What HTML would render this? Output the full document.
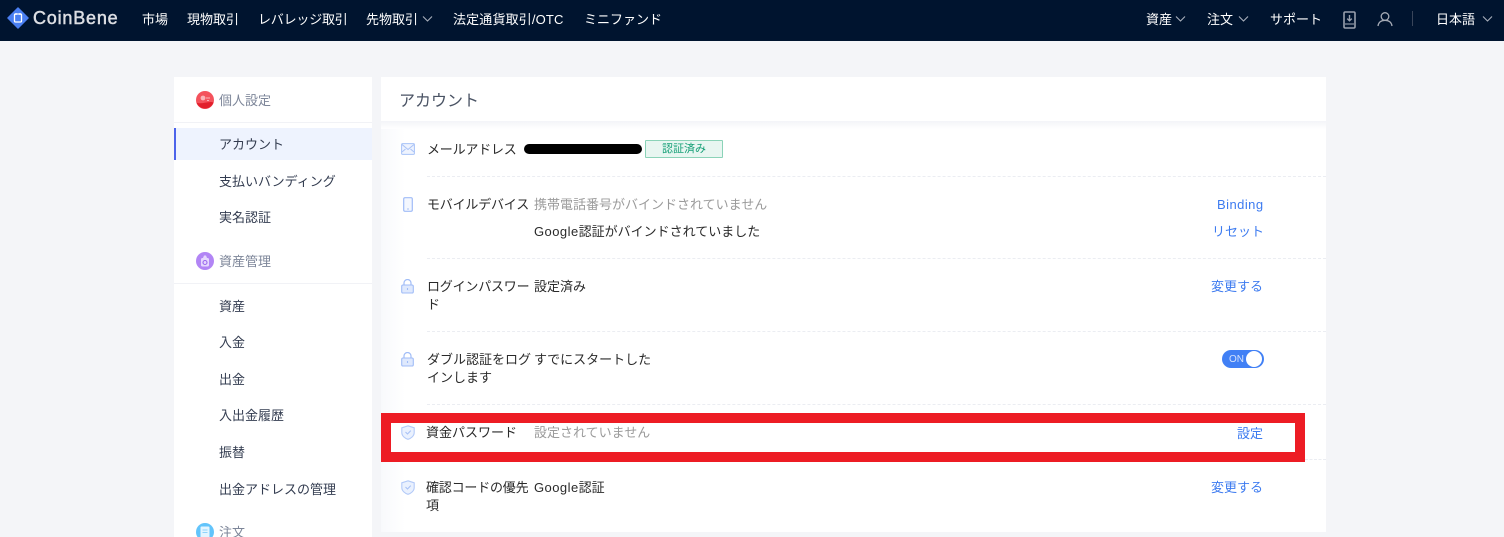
<!DOCTYPE html>
<html lang="ja">
<head>
<meta charset="utf-8">
<title>CoinBene</title>
<style>
html,body{margin:0;padding:0;width:1504px;height:537px;overflow:hidden;background:#f4f5f8;}
body{position:relative;font-family:"Liberation Sans","Noto Sans CJK JP",sans-serif;font-size:13px;color:#2b3447;}
.t{position:absolute;white-space:nowrap;line-height:18px;}
.w{position:absolute;line-height:18px;}
.nav{color:#fff;font-size:13px;line-height:18px;top:11px;}
.box{position:absolute;background:#fff;}
.side{color:#333c50;}
.head{color:#7d8699;}
.dash{position:absolute;left:427px;width:899px;height:0;border-top:1px dashed #ebedf2;}
.line{position:absolute;left:174px;width:198px;height:1px;background:#f1f2f6;}
.blue{color:#3d7bf0;}
.gray{color:#9b9b9b;}
.dark{color:#2a2a2a;}
.g{letter-spacing:.45px;}
svg{position:absolute;display:block;}
</style>
</head>
<body>
<!-- top nav -->
<div style="position:absolute;left:0;top:0;width:1504px;height:41px;background:#00142f;"></div>
<svg style="left:7px;top:7px" width="22" height="22" viewBox="0 0 22 22">
<path d="M11 1 L21 11 L11 21 L1 11 Z" fill="#4a7ff2" stroke="#4a7ff2" stroke-linejoin="round" stroke-width="1.5"/>
<rect x="7.5" y="7" width="7" height="8" rx="1" fill="none" stroke="#fff" stroke-width="1.3"/>
<path d="M9 6v2M13 6v2" stroke="#fff" stroke-width="1"/>
</svg>
<div class="t" style="left:33px;top:8px;color:#dcdee3;font-size:18px;font-weight:normal;-webkit-text-stroke:.5px #dcdee3;line-height:20px;letter-spacing:.8px;">CoinBene</div>
<div class="t nav" style="left:142px;">市場</div>
<div class="t nav" style="left:187px;">現物取引</div>
<div class="t nav" style="left:258px;letter-spacing:-.2px;">レバレッジ取引</div>
<div class="t nav" style="left:366px;">先物取引</div>
<svg style="left:422px;top:15px" width="11" height="8" viewBox="0 0 11 8"><path d="M1 1.5 L5.5 6 L10 1.5" fill="none" stroke="#a9b0bc" stroke-width="1.1"/></svg>
<div class="t nav" style="left:453px;letter-spacing:.15px;">法定通貨取引/OTC</div>
<div class="t nav" style="left:584px;">ミニファンド</div>

<div class="t nav" style="left:1146px;">資産</div>
<svg style="left:1175px;top:15px" width="11" height="8" viewBox="0 0 11 8"><path d="M1 1.5 L5.5 6 L10 1.5" fill="none" stroke="#a9b0bc" stroke-width="1.1"/></svg>
<div class="t nav" style="left:1207px;">注文</div>
<svg style="left:1238px;top:15px" width="11" height="8" viewBox="0 0 11 8"><path d="M1 1.5 L5.5 6 L10 1.5" fill="none" stroke="#a9b0bc" stroke-width="1.1"/></svg>
<div class="t nav" style="left:1270px;">サポート</div>
<svg style="left:1343px;top:11px" width="13" height="18" viewBox="0 0 13 18">
<rect x="1" y="1" width="11" height="16" rx="1.2" fill="none" stroke="#99a0ad" stroke-width="1.6"/>
<path d="M6.5 4v5.5M4.2 7.6 L6.5 9.8 L8.8 7.6" fill="none" stroke="#99a0ad" stroke-width="1.4"/>
<path d="M2 13h9" stroke="#99a0ad" stroke-width="1.1"/>
</svg>
<svg style="left:1377px;top:11px" width="16" height="16" viewBox="0 0 16 16">
<circle cx="8" cy="5.5" r="3.8" fill="none" stroke="#a5abb6" stroke-width="1.3"/>
<path d="M1 15 C1.5 11 4.5 9.3 8 9.3 C11.5 9.3 14.5 11 15 15" fill="none" stroke="#a5abb6" stroke-width="1.3"/>
</svg>
<div style="position:absolute;left:1412px;top:11px;width:1px;height:15px;background:#39455a;"></div>
<div class="t nav" style="left:1436px;">日本語</div>
<svg style="left:1482px;top:15px" width="11" height="8" viewBox="0 0 11 8"><path d="M1 1.5 L5.5 6 L10 1.5" fill="none" stroke="#a9b0bc" stroke-width="1.1"/></svg>

<!-- sidebar -->
<div class="box" style="left:174px;top:77px;width:198px;height:460px;"></div>
<svg style="left:196px;top:91px" width="18" height="18" viewBox="0 0 18 18">
<circle cx="9" cy="9" r="9" fill="#f4525c"/>
<path d="M0.5 11.5 C5 14 13 9.5 17.5 11.5 A9 9 0 0 1 0.5 11.5Z" fill="#e2202c"/>
<circle cx="7" cy="7" r="2.4" fill="#f9b4b8"/><path d="M10 7h4M11 9.5h2" stroke="#f9b4b8" stroke-width="1"/>
</svg>
<div class="t head" style="left:219px;top:92px;">個人設定</div>
<div class="line" style="top:122px;"></div>
<div style="position:absolute;left:174px;top:128px;width:198px;height:32px;background:#eef3fe;"></div>
<div style="position:absolute;left:174px;top:128px;width:2px;height:32px;background:#4c63ea;"></div>
<div class="t side" style="left:219px;top:136px;">アカウント</div>
<div class="t side" style="left:219px;top:173px;">支払いバンディング</div>
<div class="t side" style="left:219px;top:209px;">実名認証</div>

<svg style="left:196px;top:252px" width="18" height="18" viewBox="0 0 18 18">
<circle cx="9" cy="9" r="9" fill="#b285f5"/>
<rect x="5" y="6" width="8" height="8.5" rx="1.5" fill="#e6d8fd"/>
<circle cx="9" cy="10.5" r="2" fill="none" stroke="#9a66ee" stroke-width="1.1"/>
<path d="M7 6 L8 3.5 H10 L11 6" fill="#e6d8fd"/>
</svg>
<div class="t head" style="left:219px;top:253px;">資産管理</div>
<div class="line" style="top:283px;"></div>
<div class="t side" style="left:219px;top:298px;">資産</div>
<div class="t side" style="left:219px;top:334px;">入金</div>
<div class="t side" style="left:219px;top:371px;">出金</div>
<div class="t side" style="left:219px;top:407px;">入出金履歴</div>
<div class="t side" style="left:219px;top:444px;">振替</div>
<div class="t side" style="left:219px;top:481px;">出金アドレスの管理</div>
<svg style="left:196px;top:523px" width="18" height="18" viewBox="0 0 18 18">
<circle cx="9" cy="9" r="9" fill="#62c4fb"/>
<rect x="4.5" y="3.5" width="9" height="11" rx="1" fill="#e3f5ff"/>
<path d="M6.5 7h5M6.5 9.5h5" stroke="#8fd3fb" stroke-width="1"/>
</svg>
<div class="t head" style="left:219px;top:524px;">注文</div>

<!-- main panel -->
<div class="box" style="left:381px;top:77px;width:945px;height:455px;"></div>
<div style="position:absolute;left:381px;top:125px;width:24px;height:407px;background:linear-gradient(90deg,#f8f9fc,#fff);"></div>
<div style="position:absolute;left:381px;top:121px;width:945px;height:8px;background:linear-gradient(#f3f4f8,#fff);"></div>
<div class="t" style="left:399px;top:92px;font-size:16px;line-height:20px;color:#4a5364;">アカウント</div>

<!-- row: mail -->
<svg style="left:401px;top:143px" width="14" height="12" viewBox="0 0 14 12">
<rect x=".6" y=".6" width="12.8" height="10.8" rx="1" fill="#eef3fe" stroke="#a8c2f7" stroke-width="1"/>
<path d="M1 1.5 L7 6.5 L13 1.5M1 9l3.5-3M13 9l-3.5-3" fill="none" stroke="#a8c2f7" stroke-width="1"/>
</svg>
<div class="t dark" style="left:427px;top:141px;letter-spacing:-.2px;">メールアドレス</div>
<div style="position:absolute;left:524px;top:144px;width:118px;height:10px;background:#000;border-radius:6px;"></div>
<div class="t" style="left:645px;top:140px;width:76px;height:16px;border:1px solid #8bd3b8;background:#e8f6f1;border-radius:1px;color:#16a077;font-size:11px;line-height:16px;text-align:center;">認証済み</div>
<div class="dash" style="top:176px;"></div>

<!-- row: mobile -->
<svg style="left:403px;top:197px" width="10" height="15" viewBox="0 0 10 15">
<rect x=".7" y=".7" width="8.6" height="13.6" rx="1.3" fill="#f4f7fe" stroke="#a0bcf7" stroke-width="1.2"/>
<path d="M4 12h2" stroke="#a8c2f7" stroke-width="1"/>
</svg>
<div class="t dark" style="left:427px;top:196px;letter-spacing:-.2px;">モバイルデバイス</div>
<div class="t gray" style="left:534px;top:196px;">携帯電話番号がバインドされていません</div>
<div class="t blue" style="left:1217px;top:196px;letter-spacing:.45px;">Binding</div>
<div class="t dark" style="left:534px;top:223px;"><span class="g">Google</span>認証がバインドされていました</div>
<div class="t blue" style="left:1212px;top:223px;">リセット</div>
<div class="dash" style="top:258px;"></div>

<!-- row: login pw -->
<svg style="left:401px;top:279px" width="13" height="15" viewBox="0 0 13 15">
<rect x=".7" y="6" width="11.6" height="8" rx="1.3" fill="#dfe9fd" stroke="#a0bcf7" stroke-width="1.1"/>
<path d="M3 6V4a3.5 3.5 0 0 1 7 0v2" fill="none" stroke="#a0bcf7" stroke-width="1.2"/>
<path d="M6.5 9v2" stroke="#a0bcf7" stroke-width="1.1"/>
</svg>
<div class="w dark" style="left:427px;top:278px;letter-spacing:-.2px;">ログインパスワー<br>ド</div>
<div class="t dark" style="left:534px;top:278px;">設定済み</div>
<div class="t blue" style="left:1211px;top:278px;">変更する</div>
<div class="dash" style="top:331px;"></div>

<!-- row: 2FA -->
<svg style="left:401px;top:352px" width="13" height="15" viewBox="0 0 13 15">
<rect x=".7" y="6" width="11.6" height="8" rx="1.3" fill="#dfe9fd" stroke="#a0bcf7" stroke-width="1.1"/>
<path d="M3 6V4a3.5 3.5 0 0 1 7 0v2" fill="none" stroke="#a0bcf7" stroke-width="1.2"/>
<path d="M6.5 9v2" stroke="#a0bcf7" stroke-width="1.1"/>
</svg>
<div class="w dark" style="left:427px;top:351px;line-height:18px;">ダブル認証をログ<br>インします</div>
<div class="t dark" style="left:534px;top:351px;">すでにスタートした</div>
<div style="position:absolute;left:1222px;top:350px;width:42px;height:18px;background:#4180f5;border-radius:9px;"></div>
<div style="position:absolute;left:1246px;top:351px;width:16px;height:16px;background:#fff;border-radius:50%;"></div>
<div class="t" style="left:1229px;top:351px;color:#d5e2fc;font-size:10px;">ON</div>
<div class="dash" style="top:404px;"></div>

<!-- highlighted row -->
<div style="position:absolute;left:381px;top:413px;width:924px;height:49px;background:#ed1c24;"></div>
<div style="position:absolute;left:391px;top:423px;width:904px;height:29px;background:#fff;"></div>
<svg style="left:401px;top:425px" width="14" height="15" viewBox="0 0 14 15">
<path d="M7 .8 L13.2 2.8 V7.5 C13.2 11 10 13.5 7 14.3 C4 13.5 .8 11 .8 7.5 V2.8 Z" fill="#eaf1fe" stroke="#b3caf8" stroke-width="1.1"/>
<path d="M4.5 7 L6.5 9 L9.8 5.6" fill="none" stroke="#a8c2f7" stroke-width="1.1"/>
</svg>
<div class="t dark" style="left:426px;top:424px;">資金パスワード</div>
<div class="t gray" style="left:534px;top:424px;">設定されていません</div>
<div class="t blue" style="left:1237px;top:425px;">設定</div>
<div class="dash" style="top:459px;left:1305px;width:21px;"></div>

<!-- row: priority -->
<svg style="left:401px;top:480px" width="14" height="15" viewBox="0 0 14 15">
<path d="M7 .8 L13.2 2.8 V7.5 C13.2 11 10 13.5 7 14.3 C4 13.5 .8 11 .8 7.5 V2.8 Z" fill="#eaf1fe" stroke="#b3caf8" stroke-width="1.1"/>
<path d="M4.5 7 L6.5 9 L9.8 5.6" fill="none" stroke="#a8c2f7" stroke-width="1.1"/>
</svg>
<div class="w dark" style="left:426px;top:479px;letter-spacing:-.2px;">確認コードの優先<br>項</div>
<div class="t dark" style="left:534px;top:479px;"><span class="g">Google</span>認証</div>
<div class="t blue" style="left:1211px;top:479px;">変更する</div>
</body>
</html>
